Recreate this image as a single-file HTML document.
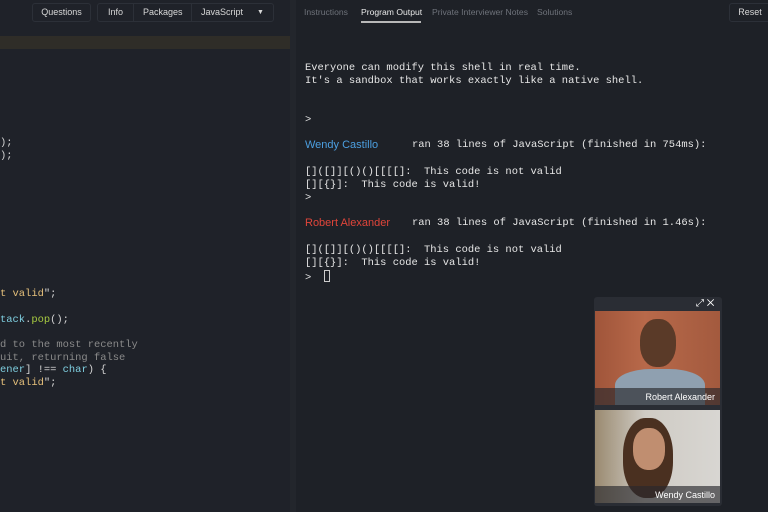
<!DOCTYPE html>
<html><head><style>
*{margin:0;padding:0;box-sizing:border-box}
body{width:768px;height:512px;background:#1e2127;overflow:hidden;position:relative;font-family:"Liberation Sans",sans-serif}
.mono{font-family:"Liberation Mono",monospace;font-size:10.45px;white-space:pre;position:absolute;line-height:13px}
.btn{position:absolute;top:3px;height:19px;border:1px solid #2c3038;border-radius:3px;color:#d8d8d8;font-size:9px;line-height:17px;text-align:center}
.nm{position:absolute;font-size:11px;font-family:"Liberation Sans",sans-serif}
</style></head><body>
<div style="position:absolute;left:0;top:0;width:290px;height:512px;background:#1f2229"></div>
<div style="position:absolute;left:290px;top:0;width:6px;height:512px;background:#23262c"></div>
<div style="position:absolute;left:0;top:36px;width:290px;height:13px;background:#2f2d28"></div>
<div class="btn" style="left:32px;width:59px">Questions</div>
<div class="btn" style="left:97px;width:177px"></div>
<div style="position:absolute;left:97px;top:3px;width:177px;height:19px;font-size:9px;color:#d8d8d8;line-height:19px">
<span style="position:absolute;left:11px">Info</span>
<span style="position:absolute;left:36px;top:0;height:19px;border-left:1px solid #2c3038"></span>
<span style="position:absolute;left:46px">Packages</span>
<span style="position:absolute;left:94px;top:0;height:19px;border-left:1px solid #2c3038"></span>
<span style="position:absolute;left:104px">JavaScript</span>
<span style="position:absolute;left:160px;font-size:7px">▼</span></div>
<div class="mono" style="left:0;top:137px;color:#d4d4d4">);
);</div>
<div class="mono" style="left:0;top:288px;color:#e5c07b">t valid<span style="color:#d4d4d4">";</span></div>
<div class="mono" style="left:0;top:314px;color:#7fcfe0">tack<span style="color:#d4d4d4">.</span><span style="color:#a6c940">pop</span><span style="color:#d4d4d4">();</span></div>
<div class="mono" style="left:0;top:339px;color:#8a8a8a">d to the most recently
uit, returning false</div>
<div class="mono" style="left:0;top:364px;color:#7fcfe0">ener<span style="color:#d4d4d4">] !== </span>char<span style="color:#d4d4d4">) {</span></div>
<div class="mono" style="left:0;top:377px;color:#e5c07b">t valid<span style="color:#d4d4d4">";</span></div>
<div style="position:absolute;left:304px;top:7px;font-size:8.6px;color:#6e727a">Instructions</div>
<div style="position:absolute;left:361px;top:7px;font-size:8.6px;color:#e8e8e8">Program Output</div>
<div style="position:absolute;left:361px;top:21px;width:60px;height:2px;background:#b8b8b8"></div>
<div style="position:absolute;left:432px;top:7px;font-size:8.6px;color:#6e727a">Private Interviewer Notes</div>
<div style="position:absolute;left:537px;top:7px;font-size:8.6px;color:#6e727a">Solutions</div>
<div class="btn" style="left:729px;width:42px">Reset</div>
<div class="mono" style="left:305px;top:62px;color:#e6e6e6">Everyone can modify this shell in real time.
It's a sandbox that works exactly like a native shell.


&gt;



[]([]][()()[[[[]:  This code is not valid
[][{}]:  This code is valid!
&gt;



[]([]][()()[[[[]:  This code is not valid
[][{}]:  This code is valid!
&gt;  <span style="display:inline-block;width:6px;height:12px;border:1px solid #ccc;vertical-align:-2px"></span></div>
<div class="nm" style="left:305px;top:139px;color:#4c9fe0">Wendy Castillo</div>
<div class="mono" style="left:412px;top:139px;color:#e6e6e6">ran 38 lines of JavaScript (finished in 754ms):</div>
<div class="nm" style="left:305px;top:217px;color:#e0453a">Robert Alexander</div>
<div class="mono" style="left:412px;top:217px;color:#e6e6e6">ran 38 lines of JavaScript (finished in 1.46s):</div>
<div style="position:absolute;left:594px;top:297px;width:128px;height:209px;background:#2a2d34;border-radius:3px"></div>
<div style="position:absolute;left:696px;top:298px;font-size:10px;color:#fff">⤢ ✕</div>
<div style="position:absolute;left:595px;top:311px;width:125px;height:94px;background:linear-gradient(90deg,#a0553a,#b8694a 40%,#a35a3e);overflow:hidden">
<div style="position:absolute;left:45px;top:8px;width:36px;height:48px;border-radius:45%;background:#5a3a28"></div>
<div style="position:absolute;left:20px;top:58px;width:90px;height:40px;border-radius:40% 40% 0 0;background:#8fa0b0"></div>
<div style="position:absolute;left:0;bottom:0;width:125px;height:17px;background:rgba(40,40,45,.65)"></div>
<div style="position:absolute;right:5px;bottom:3px;font-size:9px;color:#fff">Robert Alexander</div></div>
<div style="position:absolute;left:595px;top:410px;width:125px;height:93px;background:linear-gradient(90deg,#9a8a70,#cfcbc4 40%,#d8d6d2);overflow:hidden">
<div style="position:absolute;left:28px;top:8px;width:50px;height:80px;border-radius:45%;background:#4a3020"></div>
<div style="position:absolute;left:38px;top:18px;width:32px;height:42px;border-radius:45%;background:#c08e70"></div>
<div style="position:absolute;left:0;bottom:0;width:125px;height:17px;background:rgba(40,40,45,.65)"></div>
<div style="position:absolute;right:5px;bottom:3px;font-size:9px;color:#fff">Wendy Castillo</div></div>
</body></html>
